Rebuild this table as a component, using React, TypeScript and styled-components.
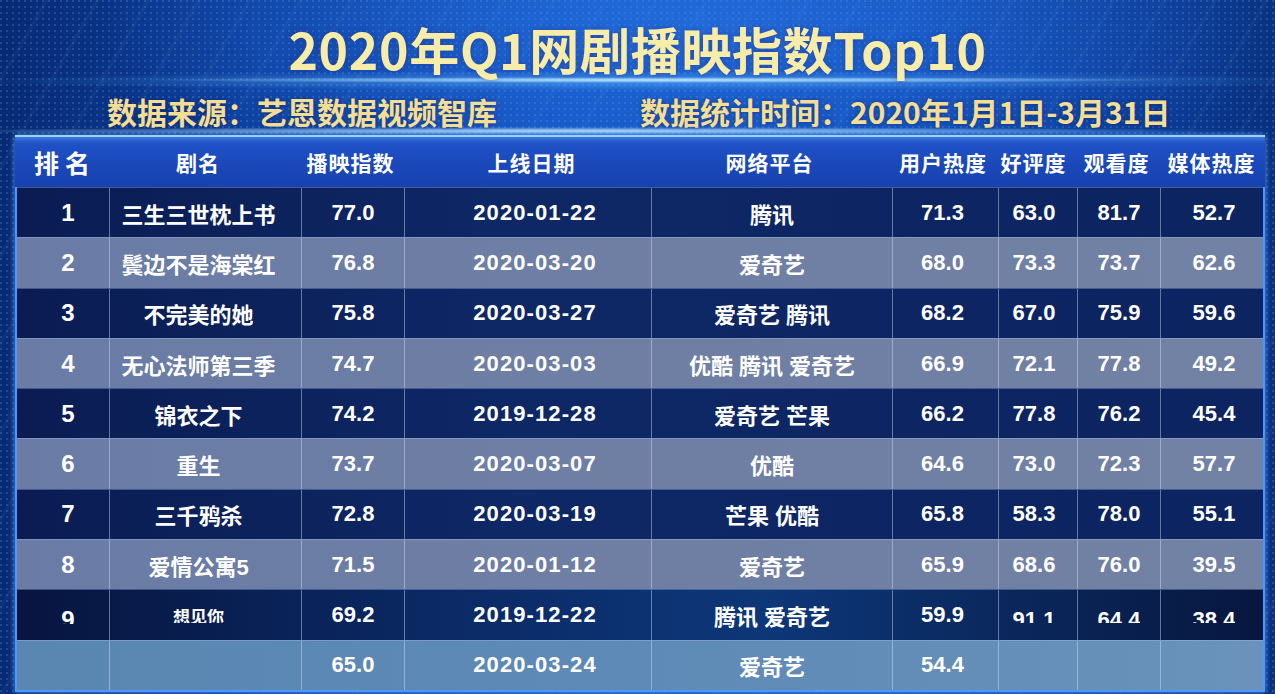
import React from "react";
import styled, { createGlobalStyle } from "styled-components";

const GlobalStyle = createGlobalStyle`
  html, body { margin: 0; padding: 0; }
  body { background: #0a3488; font-family: "Noto Sans CJK SC", "Noto Sans", sans-serif; }
`;

const COLS = "92px 192px 103px 247px 241px 106px 79px 83px 107px";

const Page = styled.div`
  position: relative;
  width: 1275px;
  height: 694px;
  overflow: hidden;
  display: flex;
  flex-direction: column;
  background:
    radial-gradient(ellipse 520px 3px at 52% 80px, rgba(200, 240, 255, 0.95), rgba(120, 200, 255, 0) 100%),
    radial-gradient(ellipse 700px 10px at 52% 81px, rgba(90, 180, 255, 0.55), rgba(90, 180, 255, 0) 100%),
    radial-gradient(ellipse 640px 4px at 45% 131px, rgba(200, 240, 255, 0.9), rgba(120, 200, 255, 0) 100%),
    radial-gradient(ellipse 600px 200px at 55% 20px, rgba(50, 130, 240, 0.55), rgba(50, 130, 240, 0) 100%),
    radial-gradient(circle at 1px 1px, rgba(160, 210, 255, 0.18) 1px, rgba(0, 0, 0, 0) 1.6px) 0 0 / 6px 6px,
    repeating-linear-gradient(120deg, rgba(255, 255, 255, 0) 0px, rgba(255, 255, 255, 0) 38px, rgba(140, 200, 255, 0.06) 40px, rgba(255, 255, 255, 0) 44px),
    linear-gradient(90deg, #072a74 0%, #0c3f9f 20%, #1150c0 45%, #0f4ab6 70%, #0b3a96 90%, #08307e 100%);
`;

const TitleBar = styled.div`
  height: 88px;
  display: flex;
  align-items: center;
  justify-content: center;
  padding-top: 8px;
  box-sizing: border-box;
`;

const Title = styled.h1`
  margin: 0;
  font-family: "Noto Sans CJK SC", sans-serif;
  font-weight: 700;
  font-size: 50px;
  line-height: 1;
  letter-spacing: 0.7px;
  color: #f8eda8;
  text-shadow: 0 0 6px rgba(40, 40, 120, 0.45);
`;

const SubRow = styled.div`
  height: 47px;
  display: grid;
  grid-template-columns: 533px auto;
  align-items: center;
  padding-left: 107px;
  box-sizing: border-box;
  padding-bottom: 2px;
`;

const SubText = styled.div`
  font-family: "Noto Sans CJK SC", sans-serif;
  font-weight: 700;
  font-size: 30px;
  line-height: 1;
  color: #f2de95;
  text-shadow: 0 0 4px rgba(20, 30, 90, 0.6);
  white-space: nowrap;
`;

const Table = styled.div`
  margin-left: 15px;
  width: 1250px;
  display: flex;
  flex-direction: column;
  border: 2px solid #4f96ff;
  border-top: none;
  box-shadow: 0 0 6px rgba(90, 170, 255, 0.8);
  box-sizing: border-box;
`;

const HeadRow = styled.div`
  display: grid;
  grid-template-columns: ${COLS};
  height: 52px;
  margin-left: -2px;
  margin-right: -2px;
  background: linear-gradient(180deg, #3b78e0 0%, #1f52c6 12%, #1a47b8 60%, #1842b0 100%);
  border-top: 2px solid #9fd0ff;
  box-sizing: border-box;
`;

const shiftCss = (s?: number) =>
  s && s < 0 ? `padding-right: ${-s}px;` : `padding-left: ${s ?? 0}px;`;

const HeadCell = styled.div<{ $big?: boolean; $shift?: number }>`
  display: flex;
  align-items: center;
  justify-content: center;
  ${(p) => shiftCss(p.$shift)}
  font-family: "Noto Sans CJK SC", sans-serif;
  font-weight: 700;
  font-size: ${(p) => (p.$big ? 25 : 21)}px;
  letter-spacing: ${(p) => (p.$big ? 6 : 1)}px;
  color: #ffffff;
  white-space: nowrap;
`;

type Tone = "dark" | "light" | "nine" | "fade";

const toneBg: Record<Tone, string> = {
  dark: "linear-gradient(90deg, #0a1c52 0%, #0e2866 40%, #0c2460 100%)",
  light: "linear-gradient(90deg, #6a7ca6 0%, #6f7fa4 50%, #7282a4 100%)",
  nine: "linear-gradient(90deg, #07153f 0%, #0b2a66 35%, #0d3778 60%, #07173f 100%)",
  fade: "linear-gradient(90deg, #5a86b2 0%, #5d8ab6 50%, #6a92ba 100%)",
};

const Row = styled.div<{ $tone: Tone }>`
  display: grid;
  grid-template-columns: ${COLS};
  height: 50.3px;
  background: ${(p) => toneBg[p.$tone]};
  border-top: 1px solid rgba(170, 200, 240, 0.35);
  box-sizing: border-box;
`;

const Cell = styled.div<{ $first?: boolean; $shift?: number; $rank?: boolean; $date?: boolean }>`
  display: flex;
  align-items: center;
  justify-content: center;
  ${(p) => shiftCss(p.$shift)}
  border-left: ${(p) => (p.$first ? "none" : "1px solid rgba(210, 225, 255, 0.45)")};
  font-family: "Liberation Sans", "Noto Sans CJK SC", sans-serif;
  font-weight: 700;
  font-size: ${(p) => (p.$rank ? 24 : 22)}px;
  letter-spacing: ${(p) => (p.$date ? 1.1 : 0)}px;
  color: #ffffff;
  white-space: pre;
  overflow: hidden;
`;

const Clip = styled.span<{ $size?: number }>`
  display: block;
  height: ${(p) => ((p.$size ?? 22) > 22 ? 16 : 14)}px;
  margin-top: 2px;
  overflow: hidden;
  font-size: ${(p) => p.$size ?? 22}px;
  line-height: ${(p) => p.$size ?? 22}px;
`;

type Rec = [string, string, string, string, string, string, string, string, string];

const data: Rec[] = [
  ["1", "三生三世枕上书", "77.0", "2020-01-22", "腾讯", "71.3", "63.0", "81.7", "52.7"],
  ["2", "鬓边不是海棠红", "76.8", "2020-03-20", "爱奇艺", "68.0", "73.3", "73.7", "62.6"],
  ["3", "不完美的她", "75.8", "2020-03-27", "爱奇艺 腾讯", "68.2", "67.0", "75.9", "59.6"],
  ["4", "无心法师第三季", "74.7", "2020-03-03", "优酷 腾讯 爱奇艺", "66.9", "72.1", "77.8", "49.2"],
  ["5", "锦衣之下", "74.2", "2019-12-28", "爱奇艺 芒果", "66.2", "77.8", "76.2", "45.4"],
  ["6", "重生", "73.7", "2020-03-07", "优酷", "64.6", "73.0", "72.3", "57.7"],
  ["7", "三千鸦杀", "72.8", "2020-03-19", "芒果 优酷", "65.8", "58.3", "78.0", "55.1"],
  ["8", "爱情公寓5", "71.5", "2020-01-12", "爱奇艺", "65.9", "68.6", "76.0", "39.5"],
  ["9", "想见你", "69.2", "2019-12-22", "腾讯 爱奇艺", "59.9", "91.1", "64.4", "38.4"],
  ["", "", "65.0", "2020-03-24", "爱奇艺", "54.4", "", "", ""],
];

const heads = ["排名", "剧名", "播映指数", "上线日期", "网络平台", "用户热度", "好评度", "观看度", "媒体热度"];
const headShifts = [8, -10, 0, 12, 0, 0, -4, 0, 0];
const shifts = [10, -14, 0, 14, 0, -6, -8, 0, 0];
const clippedNine = [0, 1, 6, 7, 8];

function toneFor(i: number): Tone {
  if (i === 8) return "nine";
  if (i === 9) return "fade";
  return i % 2 === 0 ? "dark" : "light";
}

export default function App() {
  return (
    <>
      <GlobalStyle />
      <Page>
        <TitleBar>
          <Title>2020年Q1网剧播映指数Top10</Title>
        </TitleBar>
        <SubRow>
          <SubText>数据来源：艺恩数据视频智库</SubText>
          <SubText>数据统计时间：2020年1月1日-3月31日</SubText>
        </SubRow>
        <Table>
          <HeadRow>
            {heads.map((h, i) => (
              <HeadCell key={h} $big={i === 0} $shift={headShifts[i]}>
                {h}
              </HeadCell>
            ))}
          </HeadRow>
          {data.map((r, ri) => (
            <Row key={ri} $tone={toneFor(ri)}>
              {r.map((v, ci) => (
                <Cell
                  key={ci}
                  $first={ci === 0}
                  $shift={shifts[ci]}
                  $rank={ci === 0}
                  $date={ci === 3}
                >
                  {ri === 8 && clippedNine.includes(ci) ? (
                    <Clip $size={ci === 1 ? 17 : ci === 0 ? 24 : 22}>{v}</Clip>
                  ) : (
                    v
                  )}
                </Cell>
              ))}
            </Row>
          ))}
        </Table>
      </Page>
    </>
  );
}
